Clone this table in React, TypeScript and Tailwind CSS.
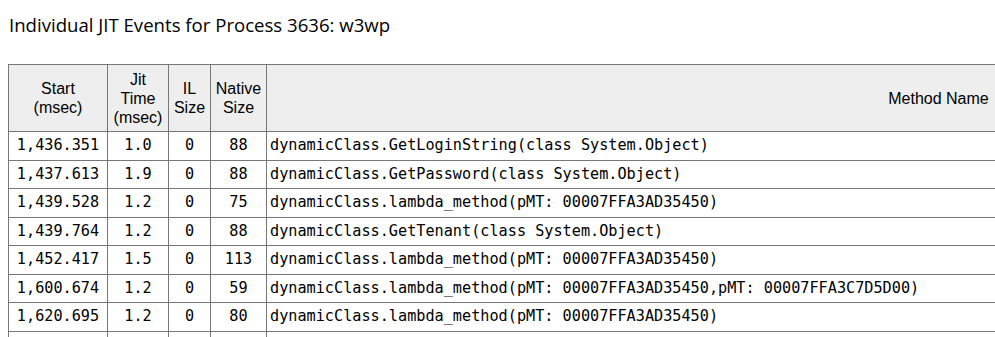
import React from 'react';

type JitEvent = {
  start: string;
  jitTime: string;
  ilSize: string;
  nativeSize: string;
  method: string;
};

const events: JitEvent[] = [
  { start: '1,436.351', jitTime: '1.0', ilSize: '0', nativeSize: '88', method: 'dynamicClass.GetLoginString(class System.Object)' },
  { start: '1,437.613', jitTime: '1.9', ilSize: '0', nativeSize: '88', method: 'dynamicClass.GetPassword(class System.Object)' },
  { start: '1,439.528', jitTime: '1.2', ilSize: '0', nativeSize: '75', method: 'dynamicClass.lambda_method(pMT: 00007FFA3AD35450)' },
  { start: '1,439.764', jitTime: '1.2', ilSize: '0', nativeSize: '88', method: 'dynamicClass.GetTenant(class System.Object)' },
  { start: '1,452.417', jitTime: '1.5', ilSize: '0', nativeSize: '113', method: 'dynamicClass.lambda_method(pMT: 00007FFA3AD35450)' },
  { start: '1,600.674', jitTime: '1.2', ilSize: '0', nativeSize: '59', method: 'dynamicClass.lambda_method(pMT: 00007FFA3AD35450,pMT: 00007FFA3C7D5D00)' },
  { start: '1,620.695', jitTime: '1.2', ilSize: '0', nativeSize: '80', method: 'dynamicClass.lambda_method(pMT: 00007FFA3AD35450)' },
];

const App: React.FC = () => {
  const th = 'border border-[#777777] bg-[#eeeeee] px-[2px] font-normal text-center align-middle leading-[19px]';
  const td = 'border border-[#777777] h-[28.5px] py-0 text-center whitespace-nowrap';

  return (
    <div className="w-[995px] h-[337px] overflow-hidden bg-white text-black">
      <div className="px-2 pt-[13px]">
        <h1 className="text-[18.6px] leading-[24px] font-normal font-['Open_Sans',sans-serif] ml-px">
          Individual JIT Events for Process 3636: w3wp
        </h1>
        <table className="mt-[27px] table-fixed border-collapse w-[1603px] font-['Liberation_Sans',Arial,sans-serif] text-[16px]">
          <colgroup>
            <col className="w-[99px]" />
            <col className="w-[61px]" />
            <col className="w-[42px]" />
            <col className="w-[56px]" />
            <col />
          </colgroup>
          <thead>
            <tr className="h-[67px]">
              <th className={th}>Start<br />(msec)</th>
              <th className={th}>Jit<br />Time<br />(msec)</th>
              <th className={th}>IL<br />Size</th>
              <th className={th}>Native<br />Size</th>
              <th className={th}>Method Name</th>
            </tr>
          </thead>
          <tbody className="font-['DejaVu_Sans_Mono',monospace] text-[15.2px]">
            {events.map((e, i) => (
              <tr key={i}>
                <td className={td}>{e.start}</td>
                <td className={td}>{e.jitTime}</td>
                <td className={td}>{e.ilSize}</td>
                <td className={td}>{e.nativeSize}</td>
                <td className={`${td} !text-left pl-[3px]`}>{e.method}</td>
              </tr>
            ))}
            {/* next row is scrolled past the bottom edge; only its borders show */}
            <tr>
              <td className={td} />
              <td className={td} />
              <td className={td} />
              <td className={td} />
              <td className={td} />
            </tr>
          </tbody>
        </table>
      </div>
    </div>
  );
};

export default App;
